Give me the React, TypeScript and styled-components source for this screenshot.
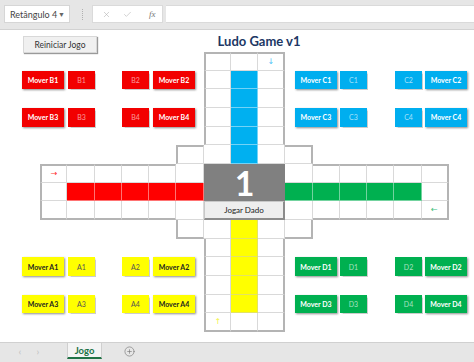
import React from 'react'
import styled, { createGlobalStyle } from 'styled-components'
import { X, Check, CirclePlus } from 'lucide-react'

type Team = 'red' | 'blue' | 'yellow' | 'green'

const palette: Record<Team, { bg: string; board: string; strong: string; soft: string; line: string }> = {
  red: { bg: '#f20000', board: '#ff0000', strong: '#ffffff', soft: 'rgba(255,255,255,0.6)', line: 'rgba(255,255,255,0.45)' },
  blue: { bg: '#00aeef', board: '#00b0f0', strong: '#ffffff', soft: 'rgba(255,255,255,0.65)', line: 'rgba(255,255,255,0.45)' },
  yellow: { bg: '#ffff00', board: '#ffff00', strong: '#222222', soft: '#555555', line: 'rgba(200,200,200,0.5)' },
  green: { bg: '#00b050', board: '#00b050', strong: '#ffffff', soft: 'rgba(255,255,255,0.65)', line: 'rgba(255,255,255,0.45)' },
}

const N = 15
const OUTLINE = '#b4b4b4'
const GRID_LINE = '#d9d9d9'

const GlobalStyle = createGlobalStyle`
  html, body {
    margin: 0;
    padding: 0;
    background: #ffffff;
  }
  body {
    font-family: Lato, "Open Sans", "Liberation Sans", sans-serif;
  }
`

const Window = styled.div`
  width: 474px;
  height: 362px;
  display: flex;
  flex-direction: column;
  overflow: hidden;
  background: #ffffff;
`

// barra de fórmulas do Excel
const TopBar = styled.div`
  box-sizing: border-box;
  height: 30px;
  flex: none;
  display: flex;
  align-items: flex-start;
  padding: 5px 0 0 4px;
  background: #e6e6e6;
  border-bottom: 1px solid #d2d2d2;
`
const NameBox = styled.div`
  box-sizing: border-box;
  width: 66px;
  height: 18px;
  display: flex;
  align-items: center;
  justify-content: space-between;
  padding: 0 4px 0 5px;
  background: #ffffff;
  border: 1px solid #d6d6d6;
  font-size: 9px;
  color: #444444;
`
const Caret = styled.span`
  font-size: 7px;
  color: #666666;
`
const Dots = styled.div`
  width: 0;
  height: 11px;
  margin: 4px 9px 0 12px;
  border-left: 1px dotted #b0b0b0;
`
const FuncBox = styled.div`
  box-sizing: border-box;
  width: 71px;
  height: 18px;
  display: flex;
  align-items: center;
  padding-left: 9px;
  gap: 12px;
  background: #ffffff;
  border: 1px solid #dadada;
  color: #b0b0b0;
`
const Fx = styled.span`
  margin-left: 5px;
  font-family: "Liberation Serif", serif;
  font-style: italic;
  font-size: 9px;
  color: #777777;
`
const FormulaInput = styled.div`
  flex: 1;
  height: 18px;
  margin-left: 3px;
  background: #ffffff;
  border-top: 1px solid #dadada;
  border-bottom: 1px solid #dadada;
  box-sizing: border-box;
`

// planilha
const Sheet = styled.div`
  flex: 1;
  display: grid;
  grid-template-columns: 40px repeat(15, 27.27px) 1fr;
  grid-template-rows: 22px repeat(15, 18.67px) 1fr;
  overflow: hidden;
`
const ResetButton = styled.div`
  grid-column: 1 / 6;
  grid-row: 1;
  align-self: end;
  justify-self: start;
  box-sizing: border-box;
  width: 74px;
  height: 17px;
  margin: 0 0 -1px 23px;
  display: flex;
  align-items: center;
  justify-content: center;
  background: #f0f0f0;
  border: 1px solid #d8d8d8;
  box-shadow: 1px 1px 1px #9a9a9a;
  font-size: 8.5px;
  color: #333333;
  z-index: 1;
`
const Title = styled.div`
  grid-column: 8 / -1;
  grid-row: 1;
  align-self: center;
  padding-left: 14px;
  font-size: 13px;
  font-weight: 700;
  color: #203764;
`
const Board = styled.div`
  grid-column: 2 / 17;
  grid-row: 2 / 17;
  display: grid;
  grid-template-columns: repeat(15, 1fr);
  grid-template-rows: repeat(15, 1fr);
`

type Edge = 'out' | 'in' | 'none'
const edge = (e: Edge, line: string) =>
  e === 'out' ? `2px solid ${OUTLINE}` : e === 'in' ? `1px solid ${line}` : 'none'

const Cell = styled.div<{ $fill?: string; $line: string; $t: Edge; $r: Edge; $b: Edge; $l: Edge }>`
  box-sizing: border-box;
  display: flex;
  align-items: center;
  justify-content: center;
  background: ${p => p.$fill ?? 'transparent'};
  border-top: ${p => edge(p.$t, p.$line)};
  border-right: ${p => edge(p.$r, p.$line)};
  border-bottom: ${p => edge(p.$b, p.$line)};
  border-left: ${p => edge(p.$l, p.$line)};
`
const Arrow = styled.span<{ $color: string }>`
  font-family: "DejaVu Sans", sans-serif;
  font-size: 8px;
  line-height: 1;
  color: ${p => p.$color};
`
const Dice = styled.div`
  grid-area: 7 / 7 / 10 / 10;
  display: grid;
  grid-template-rows: 2fr 1fr;
`
const DiceFace = styled.div`
  display: flex;
  align-items: center;
  justify-content: center;
  background: #808080;
  color: #ffffff;
  font-size: 34px;
  font-weight: 700;
  line-height: 1;
`
const RollButton = styled.div`
  box-sizing: border-box;
  display: flex;
  align-items: center;
  justify-content: center;
  background: #eeeeee;
  border: 1px solid #c8c8c8;
  border-right: 2px solid #8c8c8c;
  border-bottom: 2px solid #8c8c8c;
  font-size: 8px;
  color: #222222;
`

// painéis de botões
const Panel = styled.div<{ $cols: string; $rows: string; $padL: number; $padR: number }>`
  grid-column: ${p => p.$cols};
  grid-row: ${p => p.$rows};
  display: flex;
  flex-direction: column;
  justify-content: space-between;
  padding: 0 ${p => p.$padR}px 0 ${p => p.$padL}px;
  z-index: 1;
`
const PanelRow = styled.div`
  height: 18.67px;
  display: flex;
  justify-content: space-between;
`
const Pair = styled.div<{ $gap: number }>`
  display: flex;
  gap: ${p => p.$gap}px;
`
const MoveButton = styled.div<{ $team: Team }>`
  box-sizing: border-box;
  width: 42px;
  display: flex;
  align-items: center;
  justify-content: center;
  background: ${p => palette[p.$team].bg};
  color: ${p => palette[p.$team].strong};
  box-shadow: 1px 1px 2px rgba(0, 0, 0, 0.45);
  font-size: 7px;
  font-weight: 700;
  white-space: nowrap;
`
const Token = styled.div<{ $team: Team }>`
  width: 27px;
  display: flex;
  align-items: center;
  justify-content: center;
  background: ${p => palette[p.$team].bg};
  color: ${p => palette[p.$team].soft};
  box-shadow: 0.5px 0.5px 1px rgba(0, 0, 0, 0.2);
  font-size: 7px;
`

// abas
const TabBar = styled.div`
  box-sizing: border-box;
  height: 20px;
  flex: none;
  display: flex;
  align-items: flex-start;
  padding-left: 11px;
  background: #e6e6e6;
  border-top: 1px solid #d0d0d0;
`
const Nav = styled.span`
  width: 18px;
  margin-top: 2px;
  text-align: center;
  font-size: 10px;
  color: #c0c0c0;
`
const Tab = styled.div`
  box-sizing: border-box;
  width: 35px;
  height: 16px;
  margin-left: 20px;
  display: flex;
  align-items: center;
  justify-content: center;
  background: #f4f4f4;
  border-left: 1px solid #cfcfcf;
  border-right: 1px solid #cfcfcf;
  border-bottom: 2px solid #217346;
  font-size: 9.5px;
  font-weight: 700;
  color: #217346;
`
const AddSheet = styled.div`
  margin: 3px 0 0 22px;
  color: #777777;
  display: flex;
`

const inCross = (r: number, c: number) => {
  if (r < 0 || c < 0 || r >= N || c >= N) return false
  if (c >= 6 && c <= 8) return true
  if (r >= 6 && r <= 8) return true
  return (r === 5 || r === 9) && (c === 5 || c === 9)
}
const isCenter = (r: number, c: number) => r >= 6 && r <= 8 && c >= 6 && c <= 8

const trackColor = (r: number, c: number): Team | undefined => {
  if (c === 7 && r >= 1 && r <= 5) return 'blue'
  if (c === 7 && r >= 9 && r <= 13) return 'yellow'
  if (r === 7 && c >= 1 && c <= 5) return 'red'
  if (r === 7 && c >= 9 && c <= 13) return 'green'
  return undefined
}

const arrows: Record<string, { glyph: string; color: string }> = {
  '6-0': { glyph: '→', color: '#ff3030' },
  '0-8': { glyph: '↓', color: '#4fc3f7' },
  '8-14': { glyph: '←', color: '#3cc07a' },
  '14-6': { glyph: '↑', color: '#f2f24a' },
}

const BoardCells = () => {
  const cells: React.ReactNode[] = []
  for (let r = 0; r < N; r++) {
    for (let c = 0; c < N; c++) {
      if (isCenter(r, c)) continue
      const key = `${r}-${c}`
      if (!inCross(r, c)) {
        cells.push(<Cell key={key} $line={GRID_LINE} $t="none" $r="none" $b="none" $l="none" />)
        continue
      }
      const team = trackColor(r, c)
      const arrow = arrows[key]
      cells.push(
        <Cell
          key={key}
          $fill={team ? palette[team].board : undefined}
          $line={team ? palette[team].line : GRID_LINE}
          $t={inCross(r - 1, c) ? 'none' : 'out'}
          $l={inCross(r, c - 1) ? 'none' : 'out'}
          $r={inCross(r, c + 1) ? 'in' : 'out'}
          $b={inCross(r + 1, c) ? 'in' : 'out'}
        >
          {arrow && <Arrow $color={arrow.color}>{arrow.glyph}</Arrow>}
        </Cell>
      )
    }
  }
  return <>{cells}</>
}

type PanelProps = {
  team: Team
  letter: string
  cols: string
  rows: string
  padL: number
  padR: number
  gap: number
}

const ButtonPanel = ({ team, letter, cols, rows, padL, padR, gap }: PanelProps) => (
  <Panel $cols={cols} $rows={rows} $padL={padL} $padR={padR}>
    {[[1, 2], [3, 4]].map(([a, b]) => (
      <PanelRow key={a}>
        <Pair $gap={gap}>
          <MoveButton $team={team}>Mover {letter}{a}</MoveButton>
          <Token $team={team}>{letter}{a}</Token>
        </Pair>
        <Pair $gap={gap}>
          <Token $team={team}>{letter}{b}</Token>
          <MoveButton $team={team}>Mover {letter}{b}</MoveButton>
        </Pair>
      </PanelRow>
    ))}
  </Panel>
)

export default function App() {
  return (
    <Window>
      <GlobalStyle />
      <TopBar>
        <NameBox>
          <span>Retângulo 4</span>
          <Caret>▼</Caret>
        </NameBox>
        <Dots />
        <FuncBox>
          <X size={9} strokeWidth={1.5} />
          <Check size={9} strokeWidth={1.5} />
          <Fx>fx</Fx>
        </FuncBox>
        <FormulaInput />
      </TopBar>

      <Sheet>
        <Board>
          <BoardCells />
          <Dice>
            <DiceFace>1</DiceFace>
            <RollButton>Jogar Dado</RollButton>
          </Dice>
        </Board>
        <ResetButton>Reiniciar Jogo</ResetButton>
        <Title>Ludo Game v1</Title>
        <ButtonPanel team="red" letter="B" cols="1 / 8" rows="3 / 6" padL={22} padR={8.6} gap={4} />
        <ButtonPanel team="blue" letter="C" cols="11 / -1" rows="3 / 6" padL={9.5} padR={7} gap={3} />
        <ButtonPanel team="yellow" letter="A" cols="1 / 8" rows="13 / 16" padL={22} padR={8.6} gap={4} />
        <ButtonPanel team="green" letter="D" cols="11 / -1" rows="13 / 16" padL={9.5} padR={7} gap={3} />
      </Sheet>

      <TabBar>
        <Nav>‹</Nav>
        <Nav>›</Nav>
        <Tab>Jogo</Tab>
        <AddSheet>
          <CirclePlus size={11} strokeWidth={1.4} />
        </AddSheet>
      </TabBar>
    </Window>
  )
}
